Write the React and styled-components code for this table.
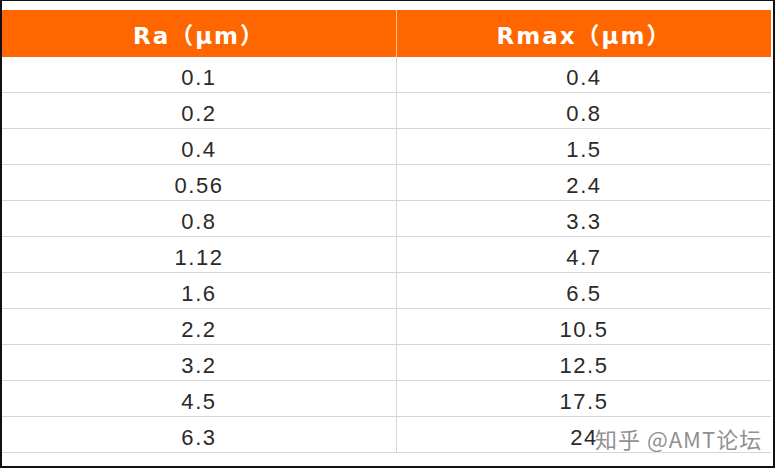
import React from 'react'
import styled, { createGlobalStyle } from 'styled-components'

const GlobalStyle = createGlobalStyle`
html, body {
  margin: 0;
  padding: 0;
  background: #ffffff;
}
`;

const Frame = styled.div`
width: 775px;
height: 468px;
box-sizing: border-box;
border-left: 2px solid #111;
border-right: 2px solid #111;
border-bottom: 2px solid #111;
border-top: 1px solid #111;
padding: 9px 2px 0 0;
background: #fff;
position: relative;
`;

const Table = styled.div`
display: grid;
grid-template-columns: 395px 1fr;
`;

const HeadCell = styled.div`
height: 47px;
background: #ff6600;
color: #fff;
display: flex;
align-items: center;
justify-content: center;
font-family: "DejaVu Sans", "Noto Sans CJK SC", sans-serif;
font-weight: bold;
font-size: 23px;
letter-spacing: 2px;
border-right: ${props => props.first ? '1px solid #f7c59a' : 'none'};
`;

const Cell = styled.div`
height: 36px;
box-sizing: border-box;
border-bottom: 1px solid #d6d6d6;
border-right: ${props => props.first ? '1px solid #d6d6d6' : 'none'};
display: flex;
align-items: center;
justify-content: center;
font-family: "Liberation Sans", Arial, sans-serif;
font-size: 22px;
letter-spacing: 1.6px;
color: #2a2a2a;
padding-top: 6px;
`;

const Watermark = styled.div`
position: absolute;
left: 593px;
top: 421px;
font-family: "Noto Sans CJK SC", sans-serif;
font-size: 22px;
color: rgba(130, 130, 130, 0.9);
letter-spacing: 1px;
white-space: nowrap;
text-shadow: 0 0 2px #fff, 0 0 2px #fff;
`;

const rows = [
  ['0.1', '0.4'],
  ['0.2', '0.8'],
  ['0.4', '1.5'],
  ['0.56', '2.4'],
  ['0.8', '3.3'],
  ['1.12', '4.7'],
  ['1.6', '6.5'],
  ['2.2', '10.5'],
  ['3.2', '12.5'],
  ['4.5', '17.5'],
  ['6.3', '24'],
];

export default function App() {
  return (
    <>
      <GlobalStyle />
      <Frame>
        <Table>
          <HeadCell first>Ra（μm）</HeadCell>
          <HeadCell>Rmax（μm）</HeadCell>
          {rows.map(([a, b]) => (
            <React.Fragment key={a}>
              <Cell first>{a}</Cell>
              <Cell>{b}</Cell>
            </React.Fragment>
          ))}
        </Table>
        <Watermark>知乎 @AMT论坛</Watermark>
      </Frame>
    </>
  )
}
